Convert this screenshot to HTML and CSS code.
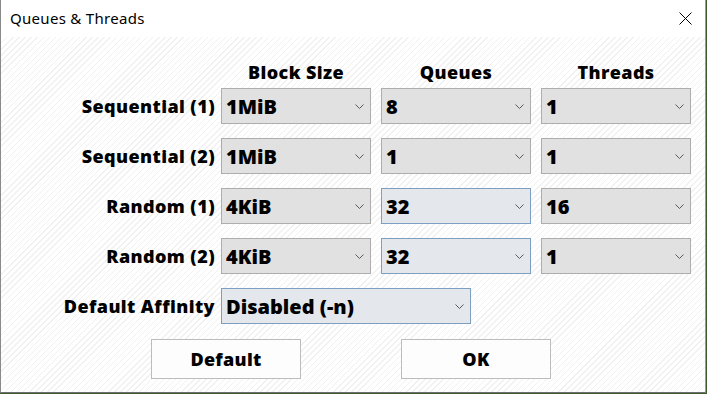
FILE: index.html
```html
<!DOCTYPE html>
<html>
<head>
<meta charset="utf-8">
<link rel="stylesheet" href="styles.css">
</head>
<body>
<div class="window">
  <div class="titlebar">
    <span class="title">Queues &amp; Threads</span>
    <svg class="close" width="13" height="13" viewBox="0 0 13 13"><path d="M0.5 0.5 L12.5 12.5 M12.5 0.5 L0.5 12.5" stroke="#000" stroke-width="1" fill="none"/></svg>
  </div>
  <div class="content">
    <div class="grid head">
      <div></div>
      <div class="colhead">Block Size</div>
      <div class="colhead">Queues</div>
      <div class="colhead">Threads</div>
    </div>
    <div class="grid rows">
      <div class="label">Sequential (1)</div>
      <div class="select"><span>1MiB</span><svg class="chev" width="9" height="5" viewBox="0 0 9 5"><path d="M0.5 0.5 L4.5 4.5 L8.5 0.5" stroke="#5a5a5a" fill="none"/></svg></div>
      <div class="select"><span>8</span><svg class="chev" width="9" height="5" viewBox="0 0 9 5"><path d="M0.5 0.5 L4.5 4.5 L8.5 0.5" stroke="#5a5a5a" fill="none"/></svg></div>
      <div class="select"><span>1</span><svg class="chev" width="9" height="5" viewBox="0 0 9 5"><path d="M0.5 0.5 L4.5 4.5 L8.5 0.5" stroke="#5a5a5a" fill="none"/></svg></div>

      <div class="label">Sequential (2)</div>
      <div class="select"><span>1MiB</span><svg class="chev" width="9" height="5" viewBox="0 0 9 5"><path d="M0.5 0.5 L4.5 4.5 L8.5 0.5" stroke="#5a5a5a" fill="none"/></svg></div>
      <div class="select"><span>1</span><svg class="chev" width="9" height="5" viewBox="0 0 9 5"><path d="M0.5 0.5 L4.5 4.5 L8.5 0.5" stroke="#5a5a5a" fill="none"/></svg></div>
      <div class="select"><span>1</span><svg class="chev" width="9" height="5" viewBox="0 0 9 5"><path d="M0.5 0.5 L4.5 4.5 L8.5 0.5" stroke="#5a5a5a" fill="none"/></svg></div>

      <div class="label">Random (1)</div>
      <div class="select"><span>4KiB</span><svg class="chev" width="9" height="5" viewBox="0 0 9 5"><path d="M0.5 0.5 L4.5 4.5 L8.5 0.5" stroke="#5a5a5a" fill="none"/></svg></div>
      <div class="select hl"><span>32</span><svg class="chev" width="9" height="5" viewBox="0 0 9 5"><path d="M0.5 0.5 L4.5 4.5 L8.5 0.5" stroke="#5a5a5a" fill="none"/></svg></div>
      <div class="select"><span>16</span><svg class="chev" width="9" height="5" viewBox="0 0 9 5"><path d="M0.5 0.5 L4.5 4.5 L8.5 0.5" stroke="#5a5a5a" fill="none"/></svg></div>

      <div class="label">Random (2)</div>
      <div class="select"><span>4KiB</span><svg class="chev" width="9" height="5" viewBox="0 0 9 5"><path d="M0.5 0.5 L4.5 4.5 L8.5 0.5" stroke="#5a5a5a" fill="none"/></svg></div>
      <div class="select hl"><span>32</span><svg class="chev" width="9" height="5" viewBox="0 0 9 5"><path d="M0.5 0.5 L4.5 4.5 L8.5 0.5" stroke="#5a5a5a" fill="none"/></svg></div>
      <div class="select"><span>1</span><svg class="chev" width="9" height="5" viewBox="0 0 9 5"><path d="M0.5 0.5 L4.5 4.5 L8.5 0.5" stroke="#5a5a5a" fill="none"/></svg></div>

      <div class="label">Default Affinity</div>
      <div class="select hl wide"><span>Disabled (-n)</span><svg class="chev" width="9" height="5" viewBox="0 0 9 5"><path d="M0.5 0.5 L4.5 4.5 L8.5 0.5" stroke="#5a5a5a" fill="none"/></svg></div>
    </div>
    <div class="buttons">
      <div class="btn">Default</div>
      <div class="btn">OK</div>
    </div>
  </div>
</div>
</body>
</html>
```

FILE: styles.css
```css
html, body {
  margin: 0;
  padding: 0;
  background: #3d5a2a;
}
body {
  width: 707px;
  height: 394px;
  overflow: hidden;
}
.window {
  box-sizing: border-box;
  width: 706px;
  height: 393px;
  border-left: 1px solid #8a8a8a;
  border-right: 1px solid #9a9a9a;
  border-bottom: 1px solid #6e6e6e;
  background: repeating-linear-gradient(135deg, #f1f1f1 0 1px, #ffffff 1px 4.3px);
  display: flex;
  flex-direction: column;
  font-family: "Open Sans", "Noto Sans", sans-serif;
  color: #000;
}
.titlebar {
  height: 37px;
  flex: none;
  background: #fff;
  display: flex;
  align-items: center;
  justify-content: space-between;
  padding: 0 13px 0 9px;
}
.title {
  font-family: "Noto Sans", sans-serif;
  font-size: 15px;
  font-weight: 400;
  letter-spacing: 0.3px;
  margin-top: -2px;
}
.close {
  display: block;
  margin-top: -1px;
}
.content {
  padding-top: 22px;
  display: flex;
  flex-direction: column;
}
.grid {
  display: grid;
  grid-template-columns: 215px 150px 150px 150px;
  column-gap: 10px;
  margin-left: -5px;
}
.head {
  height: 26px;
  margin-bottom: 3px;
  align-items: center;
}
.colhead {
  text-align: center;
  font-weight: 800;
  font-size: 18px;
  letter-spacing: 0.4px;
  line-height: 26px;
}
.rows {
  grid-auto-rows: 36px;
  row-gap: 14px;
  align-items: center;
}
.label {
  text-align: right;
  font-weight: 800;
  font-size: 18px;
  letter-spacing: 0.4px;
  white-space: nowrap;
  margin-right: -4px;
  line-height: 26px;
}
.select {
  box-sizing: border-box;
  height: 36px;
  border: 1px solid #adadad;
  background: #e1e1e1;
  display: flex;
  align-items: center;
  justify-content: space-between;
  padding: 0 6px 0 4px;
  font-weight: 800;
  font-size: 20px;
}
.select span {
  line-height: 26px;
  margin-top: 2px;
}
.select.hl {
  border-color: #7c9fc2;
  background: #e4e8ed;
}
.select.wide {
  grid-column: 2 / span 2;
  width: 250px;
}
.chev {
  display: block;
}
.buttons {
  display: flex;
  gap: 100px;
  margin-top: 15px;
  padding-left: 150px;
}
.btn {
  box-sizing: border-box;
  width: 150px;
  height: 40px;
  border: 1px solid #bcbcbc;
  background: #fdfdfd;
  display: flex;
  align-items: center;
  justify-content: center;
  font-weight: 800;
  font-size: 18px;
  letter-spacing: 0.3px;
}
```
